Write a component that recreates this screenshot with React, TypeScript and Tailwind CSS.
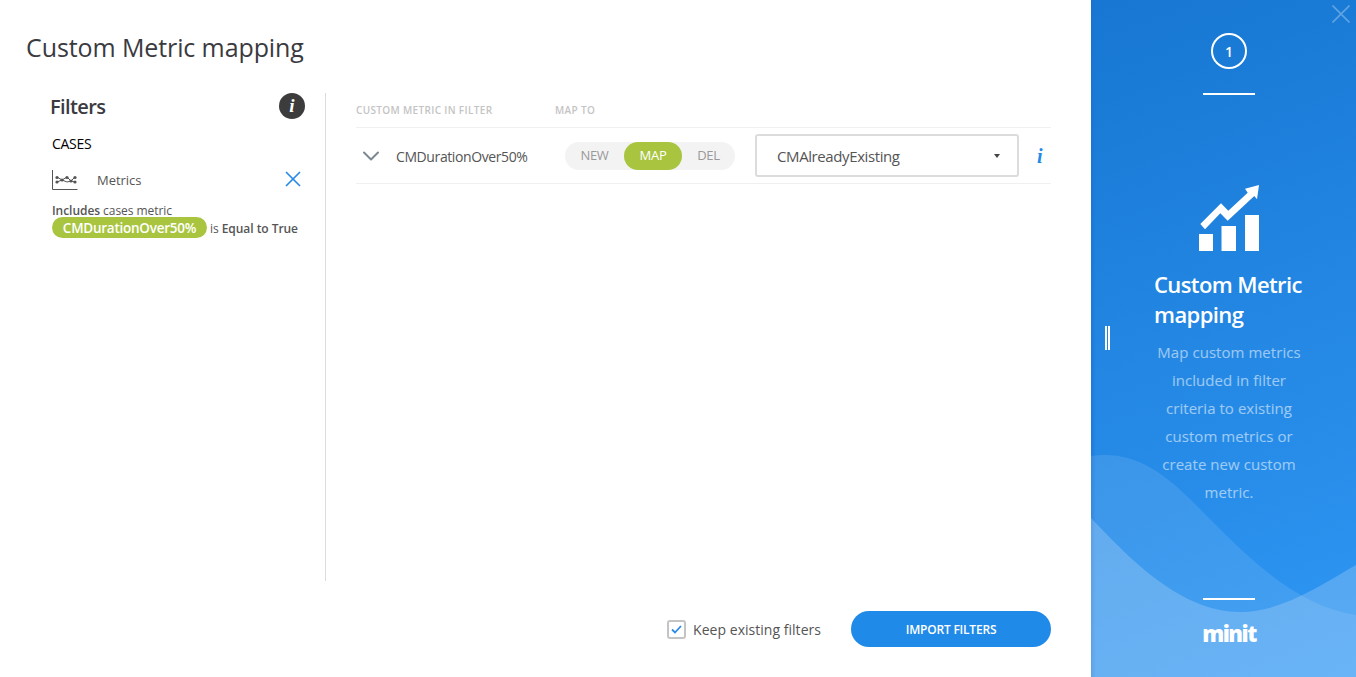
import { ChevronDown, X } from "lucide-react";

function InfoGlyph() {
  return <span className="font-['Liberation_Serif',serif] italic font-bold">i</span>;
}

function MetricsIcon() {
  return (
    <svg width="26" height="20" viewBox="0 0 26 20" fill="none" stroke="#555" className="shrink-0">
      <path d="M0.5 0v19.5h25" strokeWidth="1" />
      <path d="M5 7l5 3 5-3 4 4 4-4" strokeWidth="1" />
      <path d="M5 12l5-2 5 2 4-1 4 1" strokeWidth="1" />
      <g fill="#555" stroke="none">
        <circle cx="5" cy="7.5" r="1.6" />
        <circle cx="5" cy="12" r="1.6" />
        <circle cx="10" cy="10" r="1.6" />
        <circle cx="15" cy="7.5" r="1.6" />
        <circle cx="19" cy="11" r="1.6" />
        <circle cx="23" cy="7.5" r="1.6" />
        <circle cx="23" cy="12" r="1.6" />
      </g>
    </svg>
  );
}

function ChartIcon() {
  return (
    <svg width="60" height="67" viewBox="0 0 60 67" fill="white">
      <rect x="0" y="49" width="14" height="17" />
      <rect x="22.5" y="41" width="14.5" height="25" />
      <rect x="46" y="30" width="14" height="36" />
      <path d="M1.3 39L22 18.3L29.3 25.7L48.7 7.7L46 3.7L60 0L58 14.3L55.3 11L28.7 35.7L21.3 28.3L6 44.3Z" />
    </svg>
  );
}

function Waves() {
  return (
    <svg className="absolute bottom-0 left-0" width="265" height="247" viewBox="0 0 265 247">
      <path d="M0 26C40 20 70 40 100 70C150 120 200 175 265 185V247H0Z" fill="white" fillOpacity="0.1" />
      <path d="M0 88C40 130 90 182 150 182C190 182 230 155 265 135V247H0Z" fill="white" fillOpacity="0.2" />
    </svg>
  );
}

function FiltersColumn() {
  return (
    <aside className="w-[300px] shrink-0 pl-[24px] pr-[20px] border-r border-[#dcdcdc] h-[488px]">
      <div className="flex items-center justify-between h-[26px]">
        <h2 className="text-[20px] font-semibold text-[#3a3a3f] tracking-[-0.6px] translate-y-[1px]">Filters</h2>
        <span className="w-[26px] h-[26px] rounded-full bg-[#3c3c3c] text-white flex items-center justify-center text-[19px]">
          <InfoGlyph />
        </span>
      </div>
      <div className="pl-[2px]">
        <div className="mt-[15px] text-[14px] leading-[20px] text-black tracking-[-0.3px]">CASES</div>
        <div className="mt-[14px] flex items-center h-[24px]">
          <MetricsIcon />
          <span className="ml-[19px] text-[13px] text-[#555] tracking-[-0.05px] flex-1 translate-y-[1px]">Metrics</span>
          <X size={26} strokeWidth={1.6} className="text-[#2b8ae6] -mr-[1px] -translate-y-[1px]" />
        </div>
        <div className="mt-[10px] text-[12px] leading-[18px] text-[#555] tracking-[-0.05px] whitespace-nowrap">
          <div>
            <span className="font-semibold">Includes</span> cases metric
          </div>
          <div className="flex items-center -mt-[3px]">
            <span className="h-[21px] w-[155px] rounded-full bg-[#a9c540] text-white text-[13.5px] font-semibold flex items-center justify-center tracking-[-0.25px]">
              CMDurationOver50%
            </span>
            <span className="ml-[3px] translate-y-[1px]">
              is <span className="font-semibold">Equal to True</span>
            </span>
          </div>
        </div>
      </div>
    </aside>
  );
}

function MappingTable() {
  return (
    <section className="ml-[30px] w-[695px]">
      <div className="flex items-center h-[34px] text-[10px] font-semibold text-[#c4c4c4] tracking-[0.35px]">
        <span className="w-[199px]">CUSTOM METRIC IN FILTER</span>
        <span>MAP TO</span>
      </div>
      <div className="flex items-center h-[57px] border-y border-[#f0f0f0]">
        <ChevronDown size={28} strokeWidth={1.7} className="text-[#7b8791] ml-[1px] shrink-0" />
        <span className="ml-[11px] w-[169px] text-[14px] text-[#555] tracking-[-0.4px] translate-y-[1px]">CMDurationOver50%</span>
        <div className="flex items-center h-[28px] w-[170px] rounded-full bg-[#f3f3f3] text-[13px] text-[#999] tracking-[-0.3px]">
          <span className="w-[59px] text-center">NEW</span>
          <span className="w-[58px] h-[28px] rounded-full bg-[#a9c540] text-white flex items-center justify-center">MAP</span>
          <span className="flex-1 text-center">DEL</span>
        </div>
        <div className="ml-[20px] w-[264px] h-[43px] rounded-[3px] border-2 border-[#dcdcdc] flex items-center justify-between pl-[20px] pr-[17px]">
          <span className="text-[15px] text-[#555] tracking-[-0.4px] translate-y-[1px]">CMAlreadyExisting</span>
          <span className="w-0 h-0 border-x-[3.5px] border-x-transparent border-t-[4px] border-t-[#444]" />
        </div>
        <span className="ml-[18px] text-[#1f8ae8] text-[20px] leading-none">
          <InfoGlyph />
        </span>
      </div>
    </section>
  );
}

function Footer() {
  return (
    <footer className="flex items-center justify-end pr-[40px] mt-[30px]">
      <span className="w-[19px] h-[19px] rounded-[3px] border-2 border-[#c4c4c4] flex items-center justify-center">
        <svg width="11" height="9" viewBox="0 0 11 9" fill="none" stroke="#2b8ae6" strokeWidth="1.8">
          <path d="M1 4.5l3 3 6-6.5" />
        </svg>
      </span>
      <span className="ml-[7px] text-[14px] text-[#555] tracking-[0.03px]">Keep existing filters</span>
      <button className="ml-[30px] w-[200px] h-[36px] rounded-full bg-[#1f8ae8] text-white text-[12px] font-semibold tracking-[-0.2px] pt-[2px]">
        IMPORT FILTERS
      </button>
    </footer>
  );
}

function SidePanel() {
  return (
    <aside className="relative w-[265px] h-[677px] shrink-0 overflow-hidden bg-linear-[160deg] from-[#1777d2] to-[#2f97f4]">
      <div className="absolute inset-y-0 left-0 w-[5px] bg-linear-to-r from-[#1b6fd0]/60 to-transparent" />
      <Waves />
      <svg className="absolute top-[5px] right-[6px]" width="18" height="18" viewBox="0 0 18 18" stroke="white" strokeOpacity="0.3" strokeWidth="1.6">
        <path d="M0.5 0.5L17.5 17.5M17.5 0.5L0.5 17.5" />
      </svg>
      <div className="absolute left-[14px] top-[326px] w-[5px] h-[24px] border-x-2 border-white" />
      <div className="relative flex flex-col items-center h-full pl-[11px] text-white">
        <span className="mt-[33px] w-[36px] h-[36px] rounded-full border-2 border-white flex items-center justify-center text-[14px] font-semibold">
          1
        </span>
        <div className="mt-[24px] w-[52px] h-[2px] bg-white" />
        <div className="mt-[90px]">
          <ChartIcon />
        </div>
        <h3 className="mt-[17px] w-[150px] text-[22px] leading-[30px] font-semibold tracking-[-0.6px]">
          Custom Metric mapping
        </h3>
        <p className="mt-[9px] w-[150px] text-center text-[15px] leading-[28px] text-white/55 tracking-[0.05px]">
          Map custom metrics included in filter criteria to existing custom metrics or create new custom metric.
        </p>
        <div className="mt-auto mb-[29px] flex flex-col items-center">
          <div className="w-[52px] h-[2px] bg-white" />
          <span className="mt-[18px] text-[22px] leading-[30px] font-black font-['Noto_Sans',sans-serif] tracking-[-1.5px]">
            minit
          </span>
        </div>
      </div>
    </aside>
  );
}

export default function App() {
  return (
    <div className="flex w-[1356px] h-[677px] bg-white overflow-hidden font-['Open_Sans','Noto_Sans',sans-serif]">
      <main className="w-[1091px] shrink-0 pt-[29px]">
        <h1 className="pl-[26px] text-[25px] leading-[36px] text-[#3a3a3f] tracking-[-0.1px]">Custom Metric mapping</h1>
        <div className="flex mt-[28px] pl-[26px]">
          <FiltersColumn />
          <MappingTable />
        </div>
        <Footer />
      </main>
      <SidePanel />
    </div>
  );
}
